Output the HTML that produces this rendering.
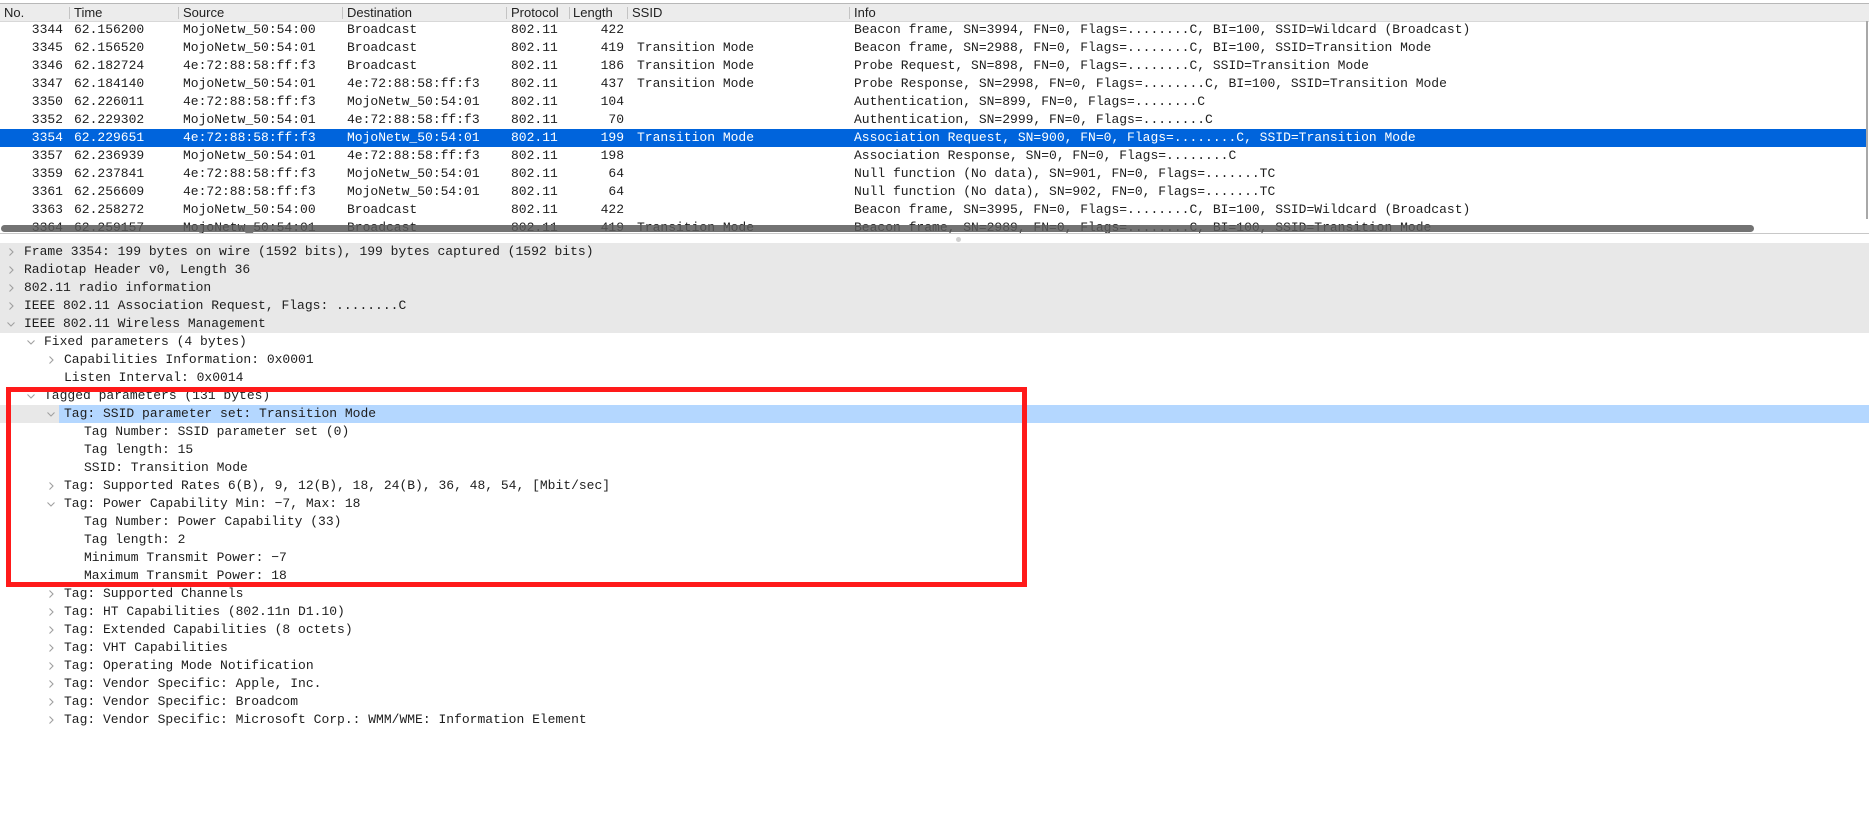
<!DOCTYPE html>
<html><head><meta charset="utf-8"><style>
*{margin:0;padding:0;box-sizing:border-box}
body{width:1869px;height:832px;background:#fff;position:relative;overflow:hidden;font-family:"Liberation Mono",monospace;font-size:13px;color:#1d1d1d}
.hdr{position:absolute;left:0;top:3px;width:1869px;height:18px;background:#ececec;border-top:1px solid #b8b8b8;font-family:"Liberation Sans",sans-serif;font-size:13px;color:#222}
.hdr span{position:absolute;top:1px}
.hdr i{position:absolute;top:3px;width:1px;height:12px;background:#c4c4c4}
.r{position:absolute;left:0;width:1866px;height:18px;line-height:18px;white-space:pre}
.r span{position:absolute;top:0}
.no{right:1803px;text-align:right}
.ln{right:1242px;text-align:right}
.sel{background:#0064dc;color:#fff}
.d{position:absolute;left:0;width:1869px;height:18px;line-height:18px;white-space:pre}
.d span{position:absolute;top:0}
.g{background:#e8e8e8}
.ar{position:absolute;top:5px;width:8px;height:8px}
</style></head><body>
<div class="hdr">
<span style="left:4px">No.</span><i style="left:69px"></i>
<span style="left:74px">Time</span><i style="left:178px"></i>
<span style="left:183px">Source</span><i style="left:342px"></i>
<span style="left:347px">Destination</span><i style="left:506px"></i>
<span style="left:511px">Protocol</span><i style="left:569px"></i>
<span style="left:573px">Length</span><i style="left:627px"></i>
<span style="left:632px">SSID</span><i style="left:849px"></i>
<span style="left:854px">Info</span>
</div>
<div style="position:absolute;left:0;top:21px;width:1869px;height:1px;background:#d8d8d8"></div>

<div class="r" style="top:21px"><span class="no">3344</span><span style="left:74px">62.156200</span><span style="left:183px">MojoNetw_50:54:00</span><span style="left:347px">Broadcast</span><span style="left:511px">802.11</span><span class="ln">422</span><span style="left:854px">Beacon frame, SN=3994, FN=0, Flags=........C, BI=100, SSID=Wildcard (Broadcast)</span></div>
<div class="r" style="top:39px"><span class="no">3345</span><span style="left:74px">62.156520</span><span style="left:183px">MojoNetw_50:54:01</span><span style="left:347px">Broadcast</span><span style="left:511px">802.11</span><span class="ln">419</span><span style="left:637px">Transition Mode</span><span style="left:854px">Beacon frame, SN=2988, FN=0, Flags=........C, BI=100, SSID=Transition Mode</span></div>
<div class="r" style="top:57px"><span class="no">3346</span><span style="left:74px">62.182724</span><span style="left:183px">4e:72:88:58:ff:f3</span><span style="left:347px">Broadcast</span><span style="left:511px">802.11</span><span class="ln">186</span><span style="left:637px">Transition Mode</span><span style="left:854px">Probe Request, SN=898, FN=0, Flags=........C, SSID=Transition Mode</span></div>
<div class="r" style="top:75px"><span class="no">3347</span><span style="left:74px">62.184140</span><span style="left:183px">MojoNetw_50:54:01</span><span style="left:347px">4e:72:88:58:ff:f3</span><span style="left:511px">802.11</span><span class="ln">437</span><span style="left:637px">Transition Mode</span><span style="left:854px">Probe Response, SN=2998, FN=0, Flags=........C, BI=100, SSID=Transition Mode</span></div>
<div class="r" style="top:93px"><span class="no">3350</span><span style="left:74px">62.226011</span><span style="left:183px">4e:72:88:58:ff:f3</span><span style="left:347px">MojoNetw_50:54:01</span><span style="left:511px">802.11</span><span class="ln">104</span><span style="left:854px">Authentication, SN=899, FN=0, Flags=........C</span></div>
<div class="r" style="top:111px"><span class="no">3352</span><span style="left:74px">62.229302</span><span style="left:183px">MojoNetw_50:54:01</span><span style="left:347px">4e:72:88:58:ff:f3</span><span style="left:511px">802.11</span><span class="ln">70</span><span style="left:854px">Authentication, SN=2999, FN=0, Flags=........C</span></div>
<div class="r sel" style="top:129px"><span class="no">3354</span><span style="left:74px">62.229651</span><span style="left:183px">4e:72:88:58:ff:f3</span><span style="left:347px">MojoNetw_50:54:01</span><span style="left:511px">802.11</span><span class="ln">199</span><span style="left:637px">Transition Mode</span><span style="left:854px">Association Request, SN=900, FN=0, Flags=........C, SSID=Transition Mode</span></div>
<div class="r" style="top:147px"><span class="no">3357</span><span style="left:74px">62.236939</span><span style="left:183px">MojoNetw_50:54:01</span><span style="left:347px">4e:72:88:58:ff:f3</span><span style="left:511px">802.11</span><span class="ln">198</span><span style="left:854px">Association Response, SN=0, FN=0, Flags=........C</span></div>
<div class="r" style="top:165px"><span class="no">3359</span><span style="left:74px">62.237841</span><span style="left:183px">4e:72:88:58:ff:f3</span><span style="left:347px">MojoNetw_50:54:01</span><span style="left:511px">802.11</span><span class="ln">64</span><span style="left:854px">Null function (No data), SN=901, FN=0, Flags=.......TC</span></div>
<div class="r" style="top:183px"><span class="no">3361</span><span style="left:74px">62.256609</span><span style="left:183px">4e:72:88:58:ff:f3</span><span style="left:347px">MojoNetw_50:54:01</span><span style="left:511px">802.11</span><span class="ln">64</span><span style="left:854px">Null function (No data), SN=902, FN=0, Flags=.......TC</span></div>
<div class="r" style="top:201px"><span class="no">3363</span><span style="left:74px">62.258272</span><span style="left:183px">MojoNetw_50:54:00</span><span style="left:347px">Broadcast</span><span style="left:511px">802.11</span><span class="ln">422</span><span style="left:854px">Beacon frame, SN=3995, FN=0, Flags=........C, BI=100, SSID=Wildcard (Broadcast)</span></div>
<div class="r" style="top:219px;height:15px;overflow:hidden"><span class="no">3364</span><span style="left:74px">62.259157</span><span style="left:183px">MojoNetw_50:54:01</span><span style="left:347px">Broadcast</span><span style="left:511px">802.11</span><span class="ln">419</span><span style="left:637px">Transition Mode</span><span style="left:854px">Beacon frame, SN=2989, FN=0, Flags=........C, BI=100, SSID=Transition Mode</span></div>
<div style="position:absolute;left:1px;top:225px;width:1753px;height:7px;border-radius:4px;background:rgba(90,90,90,0.85)"></div>
<div style="position:absolute;left:1866px;top:21px;width:2px;height:198px;background:#a8a8a8"></div>
<div style="position:absolute;left:0;top:233px;width:1869px;height:1px;background:#c8c8c8"></div>
<div style="position:absolute;left:956px;top:237px;width:5px;height:5px;border-radius:50%;background:#d0d0d0"></div>

<svg width="0" height="0" style="position:absolute"><defs>
<symbol id="c" viewBox="0 0 8 8"><path d="M2.5 0.5 L6 4 L2.5 7.5" fill="none" stroke="#a0a0a0" stroke-width="1.1"/></symbol>
<symbol id="e" viewBox="0 0 8 8"><path d="M0.5 2.5 L4 6 L7.5 2.5" fill="none" stroke="#a0a0a0" stroke-width="1.1"/></symbol>
</defs></svg>

<div class="d g" style="top:243px"><svg class="ar" style="left:7px"><use href="#c"/></svg><span style="left:24px">Frame 3354: 199 bytes on wire (1592 bits), 199 bytes captured (1592 bits)</span></div>
<div class="d g" style="top:261px"><svg class="ar" style="left:7px"><use href="#c"/></svg><span style="left:24px">Radiotap Header v0, Length 36</span></div>
<div class="d g" style="top:279px"><svg class="ar" style="left:7px"><use href="#c"/></svg><span style="left:24px">802.11 radio information</span></div>
<div class="d g" style="top:297px"><svg class="ar" style="left:7px"><use href="#c"/></svg><span style="left:24px">IEEE 802.11 Association Request, Flags: ........C</span></div>
<div class="d g" style="top:315px"><svg class="ar" style="left:7px"><use href="#e"/></svg><span style="left:24px">IEEE 802.11 Wireless Management</span></div>
<div class="d" style="top:333px"><svg class="ar" style="left:27px"><use href="#e"/></svg><span style="left:44px">Fixed parameters (4 bytes)</span></div>
<div class="d" style="top:351px"><svg class="ar" style="left:47px"><use href="#c"/></svg><span style="left:64px">Capabilities Information: 0x0001</span></div>
<div class="d" style="top:369px"><span style="left:64px">Listen Interval: 0x0014</span></div>
<div class="d" style="top:387px"><svg class="ar" style="left:27px"><use href="#e"/></svg><span style="left:44px">Tagged parameters (131 bytes)</span></div>
<div class="d" style="top:405px;background:linear-gradient(to right,#e8e8e8 0,#e8e8e8 59px,#b4d7ff 59px)"><svg class="ar" style="left:47px"><use href="#e"/></svg><span style="left:64px">Tag: SSID parameter set: Transition Mode</span></div>
<div class="d" style="top:423px"><span style="left:84px">Tag Number: SSID parameter set (0)</span></div>
<div class="d" style="top:441px"><span style="left:84px">Tag length: 15</span></div>
<div class="d" style="top:459px"><span style="left:84px">SSID: Transition Mode</span></div>
<div class="d" style="top:477px"><svg class="ar" style="left:47px"><use href="#c"/></svg><span style="left:64px">Tag: Supported Rates 6(B), 9, 12(B), 18, 24(B), 36, 48, 54, [Mbit/sec]</span></div>
<div class="d" style="top:495px"><svg class="ar" style="left:47px"><use href="#e"/></svg><span style="left:64px">Tag: Power Capability Min: −7, Max: 18</span></div>
<div class="d" style="top:513px"><span style="left:84px">Tag Number: Power Capability (33)</span></div>
<div class="d" style="top:531px"><span style="left:84px">Tag length: 2</span></div>
<div class="d" style="top:549px"><span style="left:84px">Minimum Transmit Power: −7</span></div>
<div class="d" style="top:567px"><span style="left:84px">Maximum Transmit Power: 18</span></div>
<div class="d" style="top:585px"><svg class="ar" style="left:47px"><use href="#c"/></svg><span style="left:64px">Tag: Supported Channels</span></div>
<div class="d" style="top:603px"><svg class="ar" style="left:47px"><use href="#c"/></svg><span style="left:64px">Tag: HT Capabilities (802.11n D1.10)</span></div>
<div class="d" style="top:621px"><svg class="ar" style="left:47px"><use href="#c"/></svg><span style="left:64px">Tag: Extended Capabilities (8 octets)</span></div>
<div class="d" style="top:639px"><svg class="ar" style="left:47px"><use href="#c"/></svg><span style="left:64px">Tag: VHT Capabilities</span></div>
<div class="d" style="top:657px"><svg class="ar" style="left:47px"><use href="#c"/></svg><span style="left:64px">Tag: Operating Mode Notification</span></div>
<div class="d" style="top:675px"><svg class="ar" style="left:47px"><use href="#c"/></svg><span style="left:64px">Tag: Vendor Specific: Apple, Inc.</span></div>
<div class="d" style="top:693px"><svg class="ar" style="left:47px"><use href="#c"/></svg><span style="left:64px">Tag: Vendor Specific: Broadcom</span></div>
<div class="d" style="top:711px"><svg class="ar" style="left:47px"><use href="#c"/></svg><span style="left:64px">Tag: Vendor Specific: Microsoft Corp.: WMM/WME: Information Element</span></div>

<div style="position:absolute;left:6px;top:387px;width:1021px;height:200px;border:5px solid #ff1a1a"></div>
</body></html>
